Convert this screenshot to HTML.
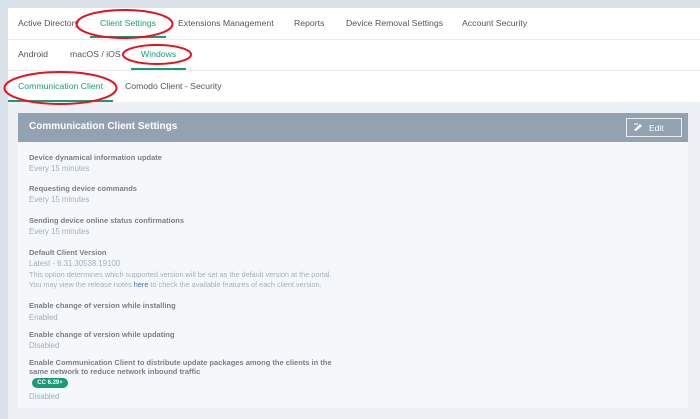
<!DOCTYPE html>
<html><head><meta charset="utf-8"><style>
*{margin:0;padding:0;box-sizing:border-box}
body{width:700px;height:419px;background:#dae1e9;font-family:"Liberation Sans",sans-serif;position:relative;overflow:hidden}
.panel{position:absolute;left:8px;top:8px;width:692px;height:94px;background:#fff}
.t{position:absolute;font-size:8.7px;color:#555;white-space:nowrap}
.g{color:#1a9a78}
.line{position:absolute;left:8px;width:692px;height:1px;background:#e8ecef}
.ul{position:absolute;height:2px;background:#1a9a78}
.content{position:absolute;left:8px;top:102px;width:692px;height:317px;background:#edf1f5}
.card{position:absolute;left:18px;top:113px;width:670px;height:295px;background:#f5f8fa}
.hdr{position:absolute;left:18px;top:113px;width:670px;height:29px;background:#93a2b1}
.lab{position:absolute;left:29px;font-size:7.5px;font-weight:bold;color:#7a7f85;white-space:nowrap}
.val{position:absolute;left:29px;font-size:7.8px;color:#a3afbd;white-space:nowrap}
.note{position:absolute;left:29px;font-size:7.3px;color:#a3afbd;white-space:nowrap}
</style></head><body>
<div class="panel"></div>
<div class="line" style="top:39px"></div>
<div class="line" style="top:70px"></div>
<div class="content"></div>
<div class="t" style="left:18px;top:18px">Active Directory</div>
<div class="t g" style="left:100px;top:18px">Client Settings</div>
<div class="t" style="left:178px;top:18px">Extensions Management</div>
<div class="t" style="left:294px;top:18px">Reports</div>
<div class="t" style="left:346px;top:18px">Device Removal Settings</div>
<div class="t" style="left:462px;top:18px">Account Security</div>
<div class="ul" style="left:90px;top:36px;width:76px"></div>
<div class="t" style="left:18px;top:49px">Android</div>
<div class="t" style="left:70px;top:49px">macOS / iOS</div>
<div class="t g" style="left:141px;top:49px">Windows</div>
<div class="ul" style="left:131px;top:68px;width:55px"></div>
<div class="t g" style="left:18px;top:81px">Communication Client</div>
<div class="t" style="left:125px;top:81px">Comodo Client - Security</div>
<div class="ul" style="left:8px;top:100px;width:105px"></div>
<div class="card"></div>
<div class="hdr"></div>
<div style="position:absolute;left:29px;top:121px;font-size:10px;font-weight:bold;color:#fff">Communication Client Settings</div>
<div style="position:absolute;left:626px;top:118px;width:56px;height:19px;border:1px solid #e8edf2;color:#fff;font-size:8.5px;padding:4px 0 0 22px">Edit</div>
<svg style="position:absolute;left:633px;top:122px" width="10" height="10"><path d="M1 8 L7 2 L9 4 L3 9 Z" fill="#fff"/><path d="M1 2 H5" stroke="#fff" stroke-width="1"/></svg>
<div class="lab" style="top:153px">Device dynamical information update</div>
<div class="val" style="top:164px">Every 15 minutes</div>
<div class="lab" style="top:184px">Requesting device commands</div>
<div class="val" style="top:195px">Every 15 minutes</div>
<div class="lab" style="top:216px">Sending device online status confirmations</div>
<div class="val" style="top:227px">Every 15 minutes</div>
<div class="lab" style="top:248px">Default Client Version</div>
<div class="val" style="top:259px">Latest - 6.31.30538.19100</div>
<div class="note" style="top:270px">This option determines which supported version will be set as the default version at the portal.</div>
<div class="note" style="top:280px">You may view the release notes <span style="color:#3d6fc2">here</span> to check the available features of each client version.</div>
<div class="lab" style="top:301px">Enable change of version while installing</div>
<div class="val" style="top:313px">Enabled</div>
<div class="lab" style="top:330px">Enable change of version while updating</div>
<div class="val" style="top:341px">Disabled</div>
<div class="lab" style="top:358px">Enable Communication Client to distribute update packages among the clients in the</div>
<div class="lab" style="top:367px">same network to reduce network inbound traffic</div>
<div style="position:absolute;left:32px;top:378px;width:36px;height:10px;border-radius:5px;background:#1a9a78;color:#fff;font-size:6px;font-weight:bold;text-align:center;line-height:10px">CC 6.29+</div>
<div class="val" style="top:392px">Disabled</div>
<svg style="position:absolute;left:0;top:0" width="700" height="419">
<g fill="none" stroke="#e3141c" stroke-width="2">
<ellipse cx="124.5" cy="24" rx="48" ry="14"/>
<ellipse cx="157" cy="54.5" rx="34" ry="9.5"/>
<ellipse cx="60.5" cy="88" rx="56" ry="16"/>
</g></svg>
</body></html>
